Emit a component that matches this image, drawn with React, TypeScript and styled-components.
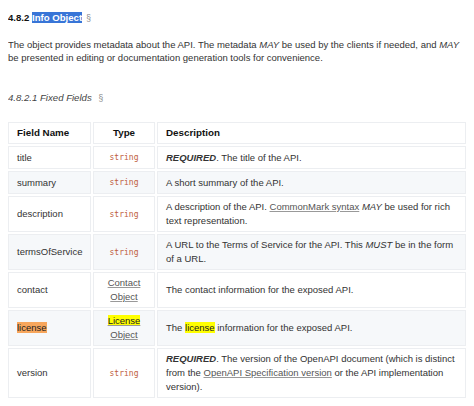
import styled, { createGlobalStyle } from 'styled-components';

const GlobalStyle = createGlobalStyle`
  body {
    margin: 8px;
    background: #fff;
    font-family: 'Liberation Sans', Arial, sans-serif;
    color: #333;
  }
`;

const Heading = styled.h4`
  margin: 3px 0 0;
  font-size: 9.6px;
  line-height: 14px;
  font-weight: bold;
  color: #111;
`;

const Selected = styled.span`
  background: #3875d7;
  color: #fff;
`;

const Anchor = styled.span`
  margin-left: 4px;
  font-weight: normal;
  font-style: normal;
  font-size: 8.5px;
  color: #888;
`;

const Para = styled.p`
  margin: 12.5px 0 0;
  font-size: 9.5px;
  line-height: 13px;
`;

const SubHeading = styled.h5`
  margin: 27.5px 0 0;
  font-size: 9.6px;
  line-height: 14px;
  font-weight: normal;
  font-style: italic;
  color: #444;
`;

const Table = styled.table`
  table-layout: fixed;
  margin: 15px 0 0 -2px;
  width: calc(100% + 4px);
  border-collapse: separate;
  border-spacing: 2px;
  font-size: 9.5px;
  line-height: 14px;
`;

const Row = styled.tr<{ $shade?: boolean }>`
  background: ${({ $shade }) => ($shade ? '#f6f8fa' : '#fff')};
`;

const HeadCell = styled.th<{ $center?: boolean }>`
  text-align: ${({ $center }) => ($center ? 'center' : 'left')};
  padding: 3px 8px;
  border: 1px solid #eceef1;
  font-size: 9.8px;
  font-weight: bold;
  color: #111;
`;

const Cell = styled.td<{ $center?: boolean }>`
  text-align: ${({ $center }) => ($center ? 'center' : 'left')};
  padding: 3px 8px;
  border: 1px solid #eceef1;
  vertical-align: middle;
`;

const Code = styled.code`
  font-family: 'DejaVu Sans Mono', 'Liberation Mono', monospace;
  font-size: 8px;
  color: #c0603e;
`;

const Link = styled.span`
  color: #555;
  text-decoration: underline;
  text-decoration-color: #999;
`;

const Mark = styled.span<{ $current?: boolean }>`
  background: ${({ $current }) => ($current ? '#f7a65c' : '#ffff00')};
  color: #222;
`;

const rows = [
  { name: 'title', type: 'string', desc: <><b><i>REQUIRED</i></b>. The title of the API.</> },
  { name: 'summary', type: 'string', desc: <>A short summary of the API.</> },
  {
    name: 'description',
    type: 'string',
    desc: <>A description of the API. <Link>CommonMark syntax</Link> <i>MAY</i> be used for rich text representation.</>,
  },
  {
    name: 'termsOfService',
    type: 'string',
    desc: <>A URL to the Terms of Service for the API. This <i>MUST</i> be in the form of a URL.</>,
  },
  {
    name: 'contact',
    type: <Link>Contact Object</Link>,
    desc: <>The contact information for the exposed API.</>,
  },
  {
    name: <Mark $current>license</Mark>,
    type: <Link><Mark>License</Mark> Object</Link>,
    desc: <>The <Mark>license</Mark> information for the exposed API.</>,
  },
  {
    name: 'version',
    type: 'string',
    desc: (
      <>
        <b><i>REQUIRED</i></b>. The version of the OpenAPI document (which is distinct from the{' '}
        <Link>OpenAPI Specification version</Link> or the API implementation version).
      </>
    ),
  },
];

export default function App() {
  return (
    <>
      <GlobalStyle />
      <Heading>
        4.8.2 <Selected>Info Object</Selected>
        <Anchor>§</Anchor>
      </Heading>
      <Para>
        The object provides metadata about the API. The metadata <i>MAY</i> be used by the clients if needed, and{' '}
        <i>MAY</i> be presented in editing or documentation generation tools for convenience.
      </Para>
      <SubHeading>
        4.8.2.1 Fixed Fields <Anchor>§</Anchor>
      </SubHeading>
      <Table>
        <colgroup>
          <col style={{ width: 83 }} />
          <col style={{ width: 62 }} />
          <col />
        </colgroup>
        <thead>
          <Row>
            <HeadCell>Field Name</HeadCell>
            <HeadCell $center>Type</HeadCell>
            <HeadCell>Description</HeadCell>
          </Row>
        </thead>
        <tbody>
          {rows.map((r, i) => (
            <Row key={i} $shade={i % 2 === 1}>
              <Cell>{r.name}</Cell>
              <Cell $center>{typeof r.type === 'string' ? <Code>{r.type}</Code> : r.type}</Cell>
              <Cell>{r.desc}</Cell>
            </Row>
          ))}
        </tbody>
      </Table>
    </>
  );
}
